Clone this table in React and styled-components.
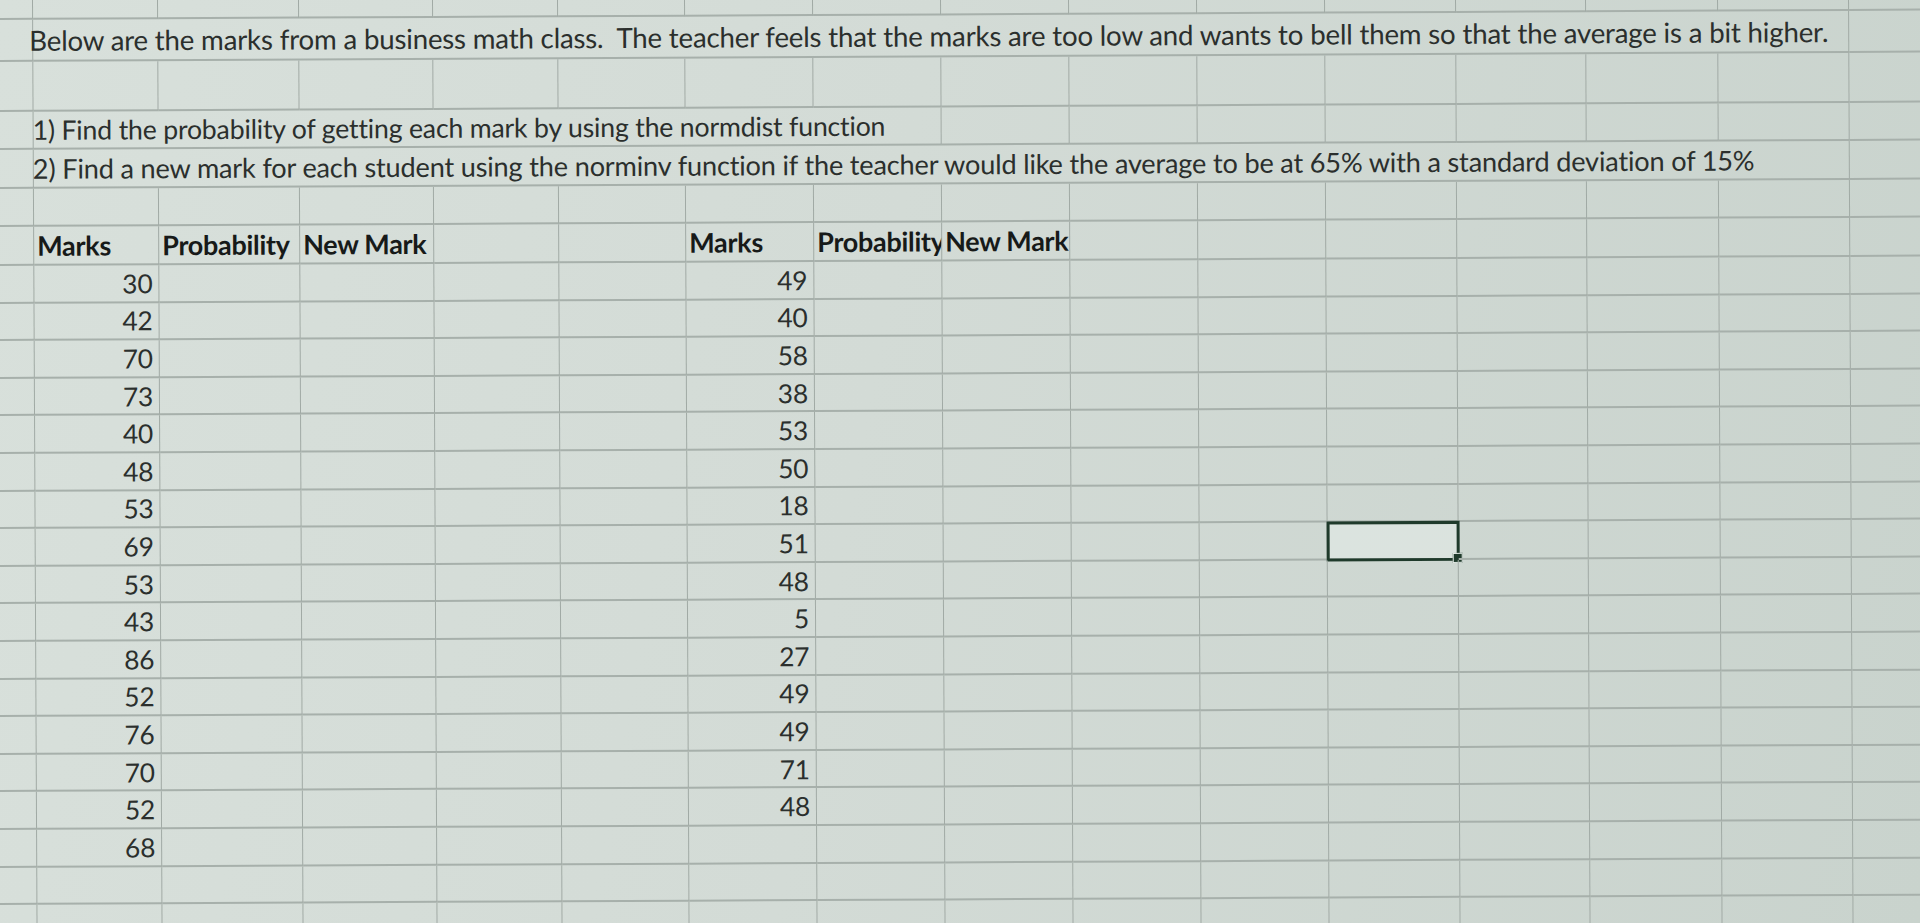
import React from 'react';
import styled, { createGlobalStyle } from 'styled-components';

const COLS = [93, 125, 141, 134, 125, 127, 128, 128, 128, 128, 128, 131, 130, 132, 131, 131, 131];
const ROWS = [20, 42, 50, 38, 39, 38, 39, ...Array(20).fill(37.6)];

const leftMarks = [30, 42, 70, 73, 40, 48, 53, 69, 53, 43, 86, 52, 76, 70, 52, 68];
const rightMarks = [49, 40, 58, 38, 53, 50, 18, 51, 48, 5, 27, 49, 49, 71, 48];

const TITLE =
  'Below are the marks from a business math class.  The teacher feels that the marks are too low and wants to bell them so that the average is a bit higher.';
const STEP_ONE = '1) Find the probability of getting each mark by using the normdist function';
const STEP_TWO =
  '2) Find a new mark for each student using the norminv function if the teacher would like the average to be at 65% with a standard deviation of 15%';

// text rows overflow across empty cells, like Excel does
const textRows = {
  1: { text: TITLE, span: 14, size: 27.7, shift: -8 },
  3: { text: STEP_ONE, span: 7, size: 26.7, shift: -5 },
  4: { text: STEP_TWO, span: 14, size: 27.2, shift: -5 },
};

const SELECTED = { row: 14, col: 11 };
const HEADER_ROW = 6;
const FIRST_DATA_ROW = 7;

const cellContent = (row, col) => {
  if (row === HEADER_ROW) {
    const heads = { 1: 'Marks', 2: 'Probability', 3: 'New Mark', 6: 'Marks', 7: 'Probability', 8: 'New Mark' };
    if (heads[col]) return { text: heads[col], bold: true };
  }
  const i = row - FIRST_DATA_ROW;
  if (i >= 0) {
    if (col === 1 && leftMarks[i] !== undefined) return { text: leftMarks[i], num: true };
    if (col === 6 && rightMarks[i] !== undefined) return { text: rightMarks[i], num: true };
  }
  return null;
};

const App = () => {
  const cells = [];
  ROWS.forEach((_, r) => {
    let c = 0;
    while (c < COLS.length) {
      const tr = textRows[r];
      if (tr && c === 1) {
        cells.push(
          <Cell key={`${r}-${c}`} $span={tr.span}>
            <CellText $size={tr.size} $shift={tr.shift}>{tr.text}</CellText>
          </Cell>
        );
        c += tr.span;
        continue;
      }
      const content = cellContent(r, c);
      const selected = r === SELECTED.row && c === SELECTED.col;
      cells.push(
        <Cell key={`${r}-${c}`} $num={content?.num} $selected={selected}>
          {content && (
            <CellText $bold={content.bold} $size={content.bold ? 27 : null} $shift={content.bold ? -1 : 0}>
              {content.text}
            </CellText>
          )}
          {selected && <FillHandle />}
        </Cell>
      );
      c += 1;
    }
  });

  return (
    <>
      <GlobalStyle />
      <Screen>
        <Sheet>{cells}</Sheet>
      </Screen>
    </>
  );
};

const GlobalStyle = createGlobalStyle`
  html, body {
    margin: 0;
    padding: 0;
    height: 100%;
    overflow: hidden;
    background: #d0d9d3;
  }
`;

const Screen = styled.div`
  width: 1920px;
  height: 923px;
  overflow: hidden;
  background: linear-gradient(100deg, #d8e0db 0%, #d3dbd6 45%, #c9d3cd 100%);
`;

const Sheet = styled.div`
  display: grid;
  grid-template-columns: ${COLS.map((w) => `${w}px`).join(' ')};
  grid-template-rows: ${ROWS.map((h) => `${h}px`).join(' ')};
  margin-left: -60px;
  width: max-content;
  transform: rotate(-0.28deg);
  transform-origin: 60px 0;
  font-family: Lato, 'Open Sans', sans-serif;
  font-size: 26.3px;
  color: #2b2f2d;
`;

const Cell = styled.div`
  position: relative;
  grid-column: span ${(p) => p.$span || 1};
  display: flex;
  align-items: center;
  justify-content: ${(p) => (p.$num ? 'flex-end' : 'flex-start')};
  padding: ${(p) => (p.$num ? '0 6px 0 0' : '0 0 0 4px')};
  border-right: 1px solid #a1aaa5;
  border-bottom: 2px solid #a7b0ab;
  overflow: ${(p) => (p.$span ? 'visible' : 'hidden')};
  white-space: nowrap;
  box-sizing: border-box;
  ${(p) =>
    p.$selected &&
    `
    overflow: visible;
    outline: 3px solid #1f3a2b;
    outline-offset: -2px;
    background: rgba(232, 239, 235, 0.5);
  `}
`;

const CellText = styled.span`
  font-size: ${(p) => (p.$size ? `${p.$size}px` : 'inherit')};
  margin-left: ${(p) => p.$shift || 0}px;
  font-weight: ${(p) => (p.$bold ? 700 : 400)};
  color: ${(p) => (p.$bold ? '#171a19' : '#2b2f2d')};
  letter-spacing: ${(p) => (p.$bold ? '-0.3px' : '-0.2px')};
  white-space: pre;
`;

const FillHandle = styled.span`
  position: absolute;
  right: -5px;
  bottom: -5px;
  width: 8px;
  height: 8px;
  background: #1f3a2b;
  border: 1px solid #e4ebe7;
`;

export default App;
